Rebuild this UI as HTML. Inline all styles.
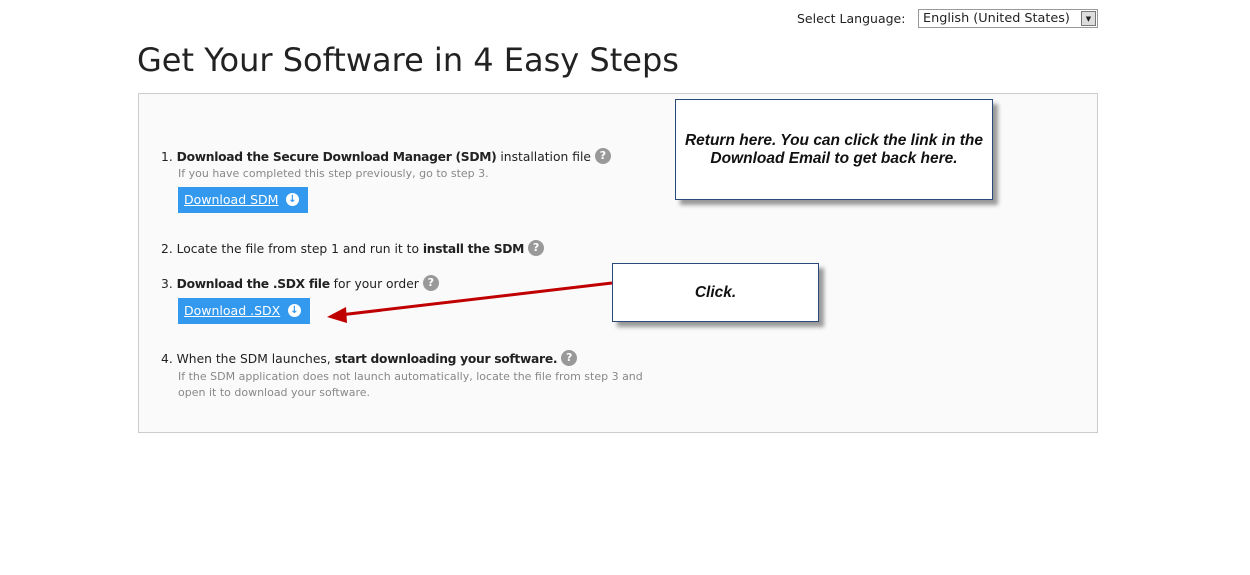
<!DOCTYPE html>
<html><head><meta charset="utf-8"><style>
body{margin:0;width:1250px;height:575px;background:#fff;font-family:Verdana,"DejaVu Sans",sans-serif;color:#222;position:relative;overflow:hidden}
.a{position:absolute;white-space:nowrap}
.q{display:inline-block;width:16px;height:16px;border-radius:50%;background:#999;color:#fff;font-size:11px;font-weight:bold;text-align:center;line-height:16px;vertical-align:2px;margin-left:4px}
.btn{position:absolute;background:#3399ee;color:#fff;font-size:12.5px;text-decoration:underline;height:26px;line-height:25px;padding-left:6px;box-sizing:border-box}
.btn i{position:absolute;right:9px;top:6px;width:13px;height:13px;border-radius:50%;background:#fff;color:#39e;font-style:normal;font-size:10px;line-height:13px;text-align:center;text-decoration:none;font-weight:bold}
.s{font-size:12.3px}
.s b{letter-spacing:-0.3px}
.sm{font-size:11px;color:#888}
.call{position:absolute;background:#fff;border:1px solid #2a4a7a;box-shadow:5px 5px 4px #999;font-family:"Liberation Sans",Arial,sans-serif;font-style:italic;font-weight:bold;font-size:15.5px;text-align:center;color:#111}
</style></head><body>
<div class="a" style="left:797px;top:11px;font-size:12.5px">Select Language:</div>
<div class="a" style="left:918px;top:9px;width:180px;height:19px;border:1px solid #999;box-sizing:border-box;font-size:12.8px;line-height:18px;padding-left:4px;background:#fff">English (United States)<span style="position:absolute;right:1px;top:1px;width:15px;height:15px;background:#ddd;border:1px solid #777;box-sizing:border-box;font-size:7px;line-height:14px;text-align:center">▼</span></div>
<div class="a" style="left:137px;top:41px;font-size:32px;color:#222">Get Your Software in 4 Easy Steps</div>
<div class="a" style="left:138px;top:93px;width:958px;height:338px;border:1px solid #ccc;background:#fafafa"></div>
<div class="a s" style="left:161px;top:148px">1. <b>Download the Secure Download Manager (SDM)</b> installation file<span class="q">?</span></div>
<div class="a sm" style="left:178px;top:167px">If you have completed this step previously, go to step 3.</div>
<div class="btn" style="left:178px;top:187px;width:130px">Download SDM<i>↓</i></div>
<div class="a s" style="left:161px;top:240px">2. Locate the file from step 1 and run it to <b>install the SDM</b><span class="q">?</span></div>
<div class="a s" style="left:161px;top:275px">3. <b>Download the .SDX file</b> for your order<span class="q">?</span></div>
<div class="btn" style="left:178px;top:298px;width:132px">Download .SDX<i>↓</i></div>
<div class="a s" style="left:161px;top:350px">4. When the SDM launches, <b>start downloading your software.</b><span class="q">?</span></div>
<div class="a sm" style="left:178px;top:369px;line-height:16px">If the SDM application does not launch automatically, locate the file from step 3 and<br>open it to download your software.</div>
<div class="call" style="left:675px;top:99px;width:318px;height:101px;line-height:18px;box-sizing:border-box;padding-top:32px">Return here. You can click the link in the<br>Download Email to get back here.</div>
<div class="call" style="left:612px;top:263px;width:207px;height:59px;line-height:58px;box-sizing:border-box">Click.</div>
<svg class="a" style="left:0;top:0" width="1250" height="575"><line x1="612" y1="283" x2="340" y2="315" stroke="#c00000" stroke-width="3"/><polygon points="327,317 346,307 347,323" fill="#c00000"/></svg>
</body></html>
